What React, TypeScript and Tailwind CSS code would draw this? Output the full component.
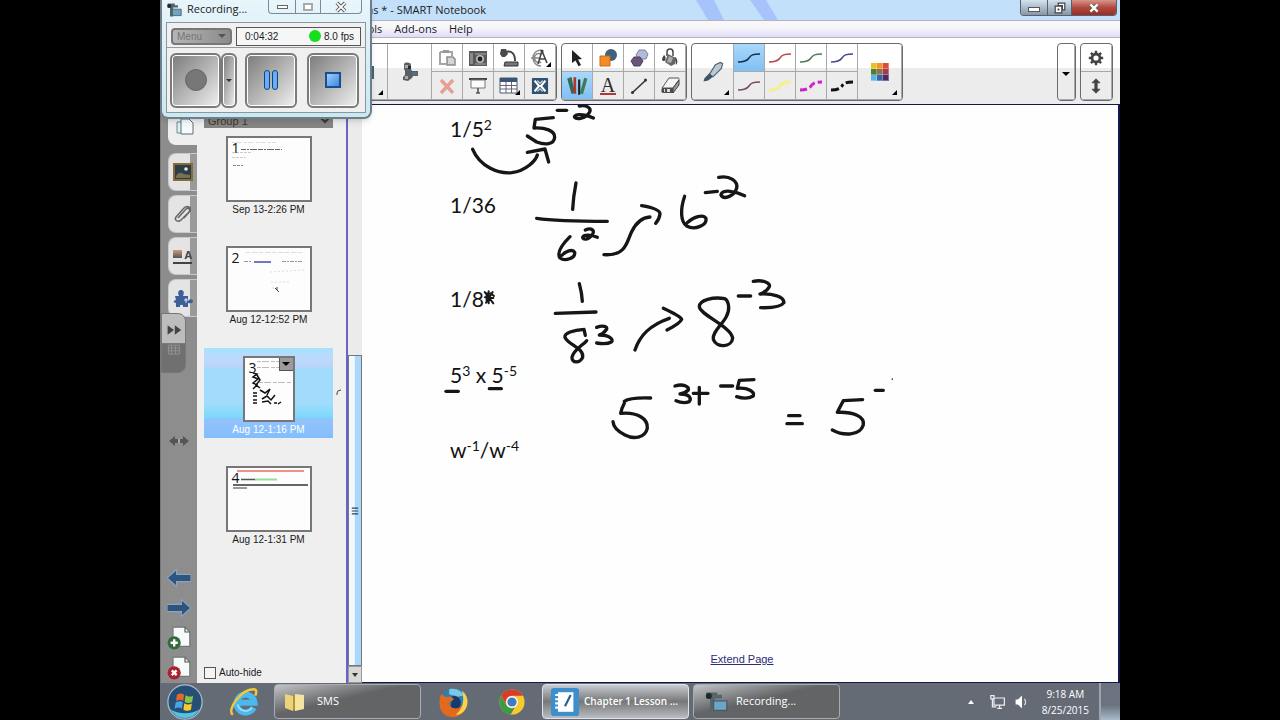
import type { ReactNode } from "react";
import clsx from "clsx";

const strokes = [
  { name: "Black pen", color: "#14304a", selected: true },
  { name: "Red pen", color: "#b8474c" },
  { name: "Green pen", color: "#4d7d5c" },
  { name: "Blue pen", color: "#45459a" },
  { name: "Purple pen", color: "#7c4668" },
  { name: "Yellow highlighter", color: "#f4f08a", width: 3 },
  { name: "Magenta dashes", color: "#cf1fcf", width: 3, dash: "7 3" },
  { name: "Black dashes", color: "#111111", width: 3, dash: "8 3 3 3" },
];

const swatches = [
  "#e8c11f", "#f0962a", "#dd4a35",
  "#4e7f33", "#8b7355", "#a33a52",
  "#5cb3ea", "#3564a8", "#4b2c5e",
];

function Icon({ children, className = "w-5 h-5" }: { children: ReactNode; className?: string }) {
  return (
    <svg viewBox="0 0 20 20" fill="none" className={clsx("shrink-0", className)} aria-hidden="true">
      {children}
    </svg>
  );
}

function Tool({
  label,
  children,
  selected = false,
  corner = false,
  className = "w-[31px]",
}: {
  label: string;
  children: ReactNode;
  selected?: boolean;
  corner?: boolean;
  className?: string;
}) {
  return (
    <button
      aria-label={label}
      className={clsx(
        "relative flex items-center justify-center border-r border-b border-[#a9a9a9]",
        selected && "bg-linear-to-b from-[#a9d8fb] to-[#7fc0f5]",
        className
      )}
    >
      {children}
      {corner && (
        <svg viewBox="0 0 5 5" className="absolute right-1 bottom-1 w-[5px] h-[5px]" aria-hidden="true">
          <path d="M5 0V5H0Z" fill="#000" />
        </svg>
      )}
    </button>
  );
}

function ToolGroup({ children, className = "" }: { children: ReactNode; className?: string }) {
  return (
    <div className={clsx("flex h-[58px] shrink-0 overflow-hidden rounded-sm border border-[#6a6a6a]", className)}>
      {children}
    </div>
  );
}

function Toolbar() {
  return (
    <div className="flex h-[66px] shrink-0 gap-1 bg-linear-to-b from-white from-45% to-[#ececec] to-46% pl-2 pr-[7px] pt-[5px]">
      <ToolGroup className="w-[389px] justify-end">
        <Tool label="Full screen" corner className="w-[220px] justify-end">
          <Icon className="w-5 h-5 mr-3">
            <rect x="1" y="4" width="18" height="13" fill="#48617a" />
          </Icon>
        </Tool>
        <Tool label="Record lesson" className="w-11">
          <Icon className="w-5 h-5">
            <path d="M4 2c1-2 7-2 7 1v4l1 2h6v5h-5l-1 2-4 3-5-1v-3l2-2V9L4 7z" fill="#5c5f62" />
            <path d="M5 3h3v3H5zM5 14h3v3H5z" fill="#a6abae" />
            <path d="M12 10h5v3h-5z" fill="#52718a" />
            <path d="M8 4h3v3H8z" fill="#2b2d2f" />
          </Icon>
        </Tool>
        <div className="grid grid-cols-[repeat(4,31px)] grid-rows-2">
          <Tool label="Paste">
            <Icon>
              <path d="M3 4h12v4M3 4v12h6" stroke="#a5a5a5" strokeWidth="2" />
              <path d="M6 2h6v3H6z" fill="#999" />
              <path d="M10 9h6l2 2v6h-8z" fill="#d4d4d4" stroke="#8c8c8c" strokeWidth="1.500" />
            </Icon>
          </Tool>
          <Tool label="Screen capture">
            <Icon>
              <rect x="1" y="3" width="18" height="15" fill="#5a5a5a" />
              <rect x="2" y="5" width="3" height="11" fill="#8a8a8a" />
              <path d="M7 6h11M7 16h11" stroke="#aaa" />
              <circle cx="12" cy="11" r="4" fill="#bbb" />
              <circle cx="12" cy="11" r="2.400" fill="#222" />
            </Icon>
          </Tool>
          <Tool label="Document camera">
            <Icon>
              <path d="M6 4c7-2 10 2 10 9" stroke="#444" strokeWidth="2" />
              <path d="M2 1h5l2 5-3 3H3L1 6z" fill="#4a4a4a" />
              <path d="M6 14h13v4H5z" fill="#777" stroke="#333" />
            </Icon>
          </Tool>
          <Tool label="Measurement tools" corner>
            <Icon>
              <path d="M11 2A8 8 0 1 0 11 18M11 6a4.500 4.500 0 1 0 0 8M1 10h8" stroke="#888" strokeWidth="1.500" />
              <path d="M12 3L8 16M12 3l5 12M9 11h7" stroke="#444" strokeWidth="1.600" />
              <circle cx="12" cy="3" r="1.600" fill="#444" />
            </Icon>
          </Tool>
          <Tool label="Delete">
            <Icon>
              <path d="M4 4l12 13M16 4L4 17" stroke="#e6a193" strokeWidth="3.400" />
            </Icon>
          </Tool>
          <Tool label="Screen shade">
            <Icon>
              <path d="M1 3h18" stroke="#444" strokeWidth="2" />
              <path d="M3 4h14v8H3z" fill="#fafafa" stroke="#777" />
              <path d="M10 12v5M8 17h4" stroke="#555" strokeWidth="1.600" />
            </Icon>
          </Tool>
          <Tool label="Table" corner>
            <Icon>
              <path d="M1 2h17v15H1z" fill="#fff" stroke="#445a70" />
              <path d="M1 2h17v4H1z" fill="#3b5674" />
              <path d="M1 9.500h17M1 13h17M7 6v11M12.500 6v11" stroke="#667" />
            </Icon>
          </Tool>
          <Tool label="SMART Exchange">
            <Icon className="h-[18px] w-[18px]">
              <rect x="1" y="1" width="18" height="18" rx="1" fill="#31506f" />
              <path d="M4 4l5 6-5 6M16 4l-5 6 5 6" stroke="#fff" strokeWidth="2.400" />
              <path d="M7 4l3 3 3-3M7 16l3-3 3 3" stroke="#b9cbdb" strokeWidth="1.500" />
            </Icon>
          </Tool>
        </div>
      </ToolGroup>

      <ToolGroup>
        <div className="grid grid-cols-[repeat(4,31px)] grid-rows-2">
          <Tool label="Select">
            <Icon>
              <path d="M5 2l10 9-4 .5 3 5.500-2.500 1.200-3-5.700L5 15z" fill="#222" />
            </Icon>
          </Tool>
          <Tool label="Shapes">
            <Icon>
              <circle cx="13" cy="7" r="6" fill="#41617f" />
              <path d="M2 8h10v10H2z" fill="#f28c28" stroke="#c96a12" />
            </Icon>
          </Tool>
          <Tool label="Regular polygons">
            <Icon>
              <path d="M10 2h6l3 4-2 5h-7L7 7z" fill="#b5b9da" stroke="#7c80a3" />
              <path d="M5 9h6l3 4-3 5H5l-3-5z" fill="#6a5578" stroke="#4f3e5c" />
            </Icon>
          </Tool>
          <Tool label="Fill">
            <Icon>
              <path d="M7 8V4a3 3 0 0 1 6 0v4" stroke="#444" strokeWidth="1.500" />
              <path d="M8 6l8 4-1 6-4 2-6-4z" fill="#666" />
              <path d="M9 8l4 2-2 5-4-1z" fill="#ababab" />
              <path d="M4 7c-3 4-2 6 0 6s2-3 1-5zM15 9c3 2 3 6 1 8z" fill="#444" />
            </Icon>
          </Tool>
          <Tool label="Pens" selected>
            <Icon className="w-[22px] h-[22px]">
              <path d="M2 3l4 14M4 2l3 14" stroke="#2d6e52" strokeWidth="2" />
              <path d="M8 2v15" stroke="#b3342e" strokeWidth="2.400" />
              <path d="M12 4v14" stroke="#222" strokeWidth="2" />
              <path d="M18 3l-4 14" stroke="#3b7d4c" strokeWidth="3" />
            </Icon>
          </Tool>
          <Tool label="Text">
            <span className="border-b-2 border-[#b0373a] px-px font-['Liberation_Serif',serif] text-xl leading-4 text-[#2b2b2b]">
              A
            </span>
          </Tool>
          <Tool label="Lines">
            <Icon>
              <path d="M3 17L17 4" stroke="#333" strokeWidth="1.600" />
              <circle cx="3.500" cy="16.500" r="1.500" fill="#333" />
              <circle cx="16.500" cy="4" r="1.500" fill="#333" />
            </Icon>
          </Tool>
          <Tool label="Eraser">
            <Icon>
              <path d="M9 2h9c2 0 1 2 0 3l-5 7H2z" fill="#f4f4f4" stroke="#555" />
              <path d="M2 12h11v5H3c-2 0-2-3-1-5z" fill="#4c4c4c" />
              <path d="M13 12l6-8v5l-6 8z" fill="#999" stroke="#444" />
              <path d="M4 13h1v3H4zM7 13h3v3H7z" fill="#ddd" />
            </Icon>
          </Tool>
        </div>
      </ToolGroup>

      <ToolGroup>
        <Tool label="Pen types" corner className="w-[42px]">
          <Icon className="w-6 h-6">
            <path d="M16 2l2 1-1 4-7 7-3-2 5-8z" fill="#bcc8d2" stroke="#526679" />
            <path d="M7 11l3 3-4 3-4 1 1-3z" fill="#3f5468" />
          </Icon>
        </Tool>
        <div className="grid grid-cols-[repeat(4,31px)] grid-rows-2">
          {strokes.map((s) => (
            <Tool key={s.name} label={s.name} selected={s.selected}>
              <svg viewBox="0 0 24 14" fill="none" className="w-6 h-[14px]" aria-hidden="true">
                <path
                  d="M1 11c5 0 9-1 11-4s4-4 11-4"
                  stroke={s.color}
                  strokeWidth={s.width ?? 1.5}
                  strokeDasharray={s.dash}
                />
              </svg>
            </Tool>
          ))}
        </div>
        <Tool label="Colors" corner className="w-11">
          <span className="grid grid-cols-3 bg-[#9a8f86]">
            {swatches.map((c) => (
              <span key={c} className="h-[6px] w-[6px] border-r border-b border-white/30" style={{ backgroundColor: c }} />
            ))}
          </span>
        </Tool>
      </ToolGroup>

      <div className="flex-1" />
      <ToolGroup>
        <Tool label="More tools" className="w-[17px]">
          <svg viewBox="0 0 8 4" className="h-1 w-2 mt-1" aria-hidden="true">
            <path d="M0 0h8L4 4z" fill="#000" />
          </svg>
        </Tool>
      </ToolGroup>
      <ToolGroup>
        <div className="grid grid-rows-2">
          <Tool label="Customize">
            <Icon className="w-4 h-4">
              <circle cx="10" cy="10" r="5" stroke="#444" strokeWidth="3.500" />
              <path
                d="M10 1v3M10 16v3M1 10h3M16 10h3M3.600 3.600l2.200 2.200M14.200 14.200l2.200 2.200M16.400 3.600l-2.200 2.200M5.800 14.200l-2.200 2.200"
                stroke="#444"
                strokeWidth="3"
              />
            </Icon>
          </Tool>
          <Tool label="Move toolbar">
            <Icon className="w-4 h-4">
              <path d="M10 4v12" stroke="#444" strokeWidth="4" />
              <path d="M5 6l5-5 5 5zM5 14l5 5 5-5z" fill="#444" stroke="#444" />
            </Icon>
          </Tool>
        </div>
      </ToolGroup>
    </div>
  );
}

function TitleBar() {
  return (
    <div className="relative flex h-5 shrink-0 items-center overflow-hidden bg-[#c3e0fb]">
      <svg viewBox="0 0 100 20" className="absolute left-[530px] h-5 w-[100px]" aria-hidden="true">
        <path d="M6 0h18l10 20H18zM60 0h16l12 20H74z" fill="#a6c3fc" />
      </svg>
      <h1 className="w-[326px] text-right text-[11px]">Lessons * - SMART Notebook</h1>
      <div className="relative ml-auto mr-[3px] flex h-4 self-start overflow-hidden rounded-b border border-t-0 border-[#55626e]">
        <button aria-label="Minimize" className="flex w-[27px] items-center justify-center border-r border-[#55626e] bg-linear-to-b from-[#d5e3f0] to-[#8696a6]">
          <span className="mt-1 h-[5px] w-3 border border-[#555] bg-white" />
        </button>
        <button aria-label="Restore" className="flex w-6 items-center justify-center border-r border-[#55626e] bg-linear-to-b from-[#d5e3f0] to-[#8696a6]">
          <Icon className="h-3 w-3">
            <path d="M7 2h11v11h-4V6H7zM2 7h11v11H2z" fill="#fff" stroke="#444" strokeWidth="2" />
            <path d="M6 11h3v3H6z" fill="#444" />
          </Icon>
        </button>
        <button aria-label="Close" className="flex w-11 items-center justify-center bg-linear-to-b from-[#d8958e] via-[#b04a41] to-[#9b2d26]">
          <Icon className="h-3 w-3">
            <path d="M4 4l12 12M16 4L4 16" stroke="#553" strokeWidth="6" />
            <path d="M4 4l12 12M16 4L4 16" stroke="#fff" strokeWidth="4" />
          </Icon>
        </button>
      </div>
    </div>
  );
}

function RailTab({ label, children, active = false }: { label: string; children: ReactNode; active?: boolean }) {
  return (
    <button
      aria-label={label}
      className={clsx(
        "flex shrink-0 items-center self-end rounded-l-lg border border-r-0 pl-1",
        active
          ? "mb-1 h-10 w-[29px] rounded-tl-none border-[#eee] bg-[#efefef] pl-[6px] pt-1"
          : "h-[38px] w-[29px] border-[#c9c9c9] bg-linear-to-r from-[#e4e4e4] from-75% to-[#9a9a9a] to-76%"
      )}
    >
      {children}
    </button>
  );
}

function PageIcon({ badge, mark }: { badge: string; mark: string }) {
  return (
    <Icon className="h-6 w-6">
      <path d="M5 1h10l4 4v12H5z" fill="#f6faf9" stroke="#777" />
      <path d="M15 1v4h4" stroke="#555" />
      <circle cx="6" cy="14" r="5.500" fill={badge} />
      <path d={mark} stroke="#fff" strokeWidth="2" />
    </Icon>
  );
}

function Rail() {
  return (
    <nav className="flex w-[37px] shrink-0 flex-col gap-1 border-l border-[#777] bg-[#8d8d8d]" aria-label="Side tabs">
      <RailTab label="Page sorter" active>
        <Icon className="h-5 w-5">
          <path d="M2 5h9v11H2z" fill="#dff1f3" stroke="#6b8a92" />
          <path d="M6 2h8l4 4v11H6z" fill="#f5fbfb" stroke="#56727a" />
        </Icon>
      </RailTab>
      <RailTab label="Gallery">
        <Icon className="h-5 w-5">
          <rect x="1" y="2" width="18" height="16" fill="#2d3d45" stroke="#8a6a35" strokeWidth="2" />
          <path d="M3 14c3-5 6-3 8-2s4 0 6 1v3H3z" fill="#77705a" />
          <circle cx="13" cy="7" r="1.800" fill="#dfe9ee" />
        </Icon>
      </RailTab>
      <RailTab label="Attachments">
        <Icon className="h-5 w-5">
          <path
            d="M5 14l8-9c2-2 5 0 3 3l-8 8c-3 3-7 0-5-3l8-9c3-3 8-1 6 3l-6 7"
            stroke="#666"
            strokeWidth="1.500"
          />
        </Icon>
      </RailTab>
      <RailTab label="Properties">
        <span className="relative block w-[19px] border-b-2 border-[#444]">
          <span className="absolute left-0 bottom-1 h-2 w-[9px] bg-linear-to-b from-[#d49a70] to-[#555]" />
          <span className="block text-right text-[11px] leading-[14px] font-bold text-[#444]">A</span>
        </span>
      </RailTab>
      <RailTab label="Add-ons">
        <Icon className="h-5 w-5">
          <path
            d="M2 8h4c-2-4 0-6 2-6s4 2 2 6h5v4c4-2 5 0 5 1s-1 3-5 2v4h-5c1-3-4-3-3 0H3v-4c-3 0-3-3 0-3z"
            fill="#3c5f98"
          />
          <path d="M13 10v5M11 12h5" stroke="#dce8f5" />
        </Icon>
      </RailTab>
      <button aria-label="Expand" className="-mt-2 flex h-[60px] w-[25px] shrink-0 flex-col items-center rounded-r-lg border border-[#777] bg-linear-to-b from-[#bdbdbd] from-50% to-[#707070] to-51% pt-2">
        <Icon className="h-4 w-4">
          <path d="M2 4l8 6-8 6zM11 4l8 6-8 6z" fill="#444" />
        </Icon>
        <Icon className="mt-1 h-4 w-4">
          <path d="M3 4h14v11H3zM3 7.500h14M3 11h14M7 4v11M12 4v11" stroke="#999" />
        </Icon>
      </button>
      <button aria-label="Resize sorter" className="mt-[54px] flex justify-center">
        <Icon className="h-5 w-5">
          <path d="M6 5L0 10l6 5v-3h8v3l6-5-6-5v3H6z" fill="#555" />
          <path d="M9 8h2v4H9z" fill="#aaa" />
        </Icon>
      </button>
      <div className="mt-auto flex flex-col items-center">
        <button aria-label="Previous page" className="flex h-[30px] items-center">
          <Icon className="h-6 w-6">
            <path d="M0 10l8-7v4h12v6H8v4z" fill="#2f5480" stroke="#8aa3be" />
          </Icon>
        </button>
        <button aria-label="Next page" className="flex h-[30px] items-center">
          <Icon className="h-6 w-6">
            <path d="M20 10l-8-7v4H0v6h12v4z" fill="#2f5480" stroke="#8aa3be" />
          </Icon>
        </button>
        <button aria-label="Add page" className="flex h-[30px] items-center">
          <PageIcon badge="#33693c" mark="M6 11v6M3 14h6" />
        </button>
        <button aria-label="Delete page" className="flex h-[30px] items-center">
          <PageIcon badge="#a8232f" mark="M4 12l4 4M8 12l-4 4" />
        </button>
      </div>
    </nav>
  );
}

const pages = [
  {
    number: 1,
    date: "Sep 13-2:26 PM",
    art: (
      <>
        <path d="M4 4.500h44" stroke="#ddd" strokeDasharray="3 1 6 2" />
        <path d="M13 11.500h41" stroke="#666" strokeDasharray="5 1 2 1 7 1" />
        <path d="M4 14.500h20M4 19.500h14" stroke="#ccc" strokeDasharray="3 1" />
        <path d="M5 27.500h10" stroke="#888" strokeDasharray="3 1" />
      </>
    ),
  },
  {
    number: 2,
    date: "Aug 12-12:52 PM",
    art: (
      <>
        <path d="M18 4.500h56" stroke="#ddd" strokeDasharray="4 2 6 1" />
        <path d="M54 13.500h20M16 13.500h7" stroke="#999" strokeDasharray="4 1 2 1" />
        <path d="M26 14h17" stroke="#4548ab" strokeWidth="1.500" />
        <path d="M42 24l34-2M43 34h18M44 40h4" stroke="#ddd" strokeDasharray="2 2" />
        <path d="M47 40l4 4M49 39v3" stroke="#444" />
      </>
    ),
  },
  {
    number: 3,
    date: "Aug 12-1:16 PM",
    selected: true,
    art: (
      <>
        <path d="M12 3.500h22M12 9.500h22M14 24.500h32" stroke="#bbb" strokeDasharray="4 1 7 2" />
        <path
          d="M8 15l4 1-4 3 5 2-5 4 4 2-4 4M12 17l3 5-4 5 4 3M8 35h4M8 38h4M8 42h4M8 45h4M15 32l5 3 5-4-3 6M17 41l5-3 4 4 4-5M17 44l6-1 3 3M29 45h3M33 46l3-2"
          stroke="#111"
          strokeWidth="1.500"
        />
      </>
    ),
  },
  {
    number: 4,
    date: "Aug 12-1:31 PM",
    art: (
      <>
        <path d="M9 3h67" stroke="#ef8f85" strokeWidth="2" />
        <path d="M13 11.500h14" stroke="#555" strokeWidth="1.500" />
        <path d="M27 11.500h22" stroke="#94de9c" strokeWidth="2" />
        <path d="M5 17h75" stroke="#666" strokeWidth="2" />
        <path d="M5 20h14" stroke="#777" strokeWidth="1.500" />
      </>
    ),
  },
];

function PageSorter() {
  return (
    <aside className="flex w-[149px] shrink-0 flex-col bg-[#efefef] pl-[7px] pt-2 font-['Liberation_Sans',sans-serif] text-[10px]">
      <select aria-label="Group" className="h-[15px] w-[129px] shrink-0 bg-[#858585] text-[11px] text-[#40382a]">
        <option>Group 1</option>
      </select>
      <ol className="flex flex-col gap-5">
        {pages.map((page) => (
          <li
            key={page.number}
            className={clsx(
              "relative flex h-[90px] w-[129px] flex-col items-center pt-2",
              page.selected &&
                "bg-linear-to-b from-[#a5e3fd] via-[#bdd8fb] via-12% to-[#84bdfc] text-white"
            )}
          >
            {page.selected && (
              <span className="absolute inset-x-0 top-[20px] h-[50px] bg-linear-to-b from-[#a2dcfd] from-70% to-[#78d9fb]" />
            )}
            <div
              className={clsx(
                "relative h-[66px] shrink-0 overflow-hidden border-2 border-[#777] bg-[#fdfdfd] text-[#111]",
                page.selected ? "w-[52px]" : "w-[86px]"
              )}
            >
              <svg viewBox="0 0 84 62" fill="none" className="absolute left-0 top-0 h-[62px] w-[84px]" aria-hidden="true">
                {page.art}
              </svg>
              <span className="relative block pl-1 pt-1 font-['Open_Sans',sans-serif] text-sm leading-3">{page.number}</span>
              {page.selected && (
                <button aria-label="Page menu" className="absolute right-0 top-0 flex h-[13px] w-[14px] items-center justify-center border-b border-l border-[#555] bg-[#9b9b9b]">
                  <svg viewBox="0 0 8 4" className="h-1 w-2" aria-hidden="true">
                    <path d="M0 0h8L4 4z" fill="#000" />
                  </svg>
                </button>
              )}
            </div>
            <span className="relative leading-4">{page.date}</span>
            {page.selected && (
              <svg viewBox="0 0 5 8" fill="none" className="absolute -right-2 top-[41px] h-2 w-[5px]" aria-hidden="true">
                <path d="M5 1Q1 1 1 4v2" stroke="#444" />
              </svg>
            )}
          </li>
        ))}
      </ol>
      <label className="mt-auto mb-1 flex items-center gap-[3px] leading-3">
        <input type="checkbox" className="h-3 w-3 appearance-none border border-[#555] bg-[#f4f4f4]" />
        Auto-hide
      </label>
    </aside>
  );
}

function Scrollbar() {
  return (
    <div className="flex w-4 shrink-0 flex-col border-l-2 border-[#6a62c4] bg-[#ebebeb]">
      <div className="h-[250px] shrink-0" />
      <div className="flex flex-1 items-center justify-center border border-[#777] bg-linear-to-r from-[#f2f8fd] from-45% to-[#a9d8fb] to-50%">
        <Icon className="h-2 w-2">
          <path d="M2 3h16M2 10h16M2 17h16" stroke="#26455e" strokeWidth="3" />
        </Icon>
      </div>
      <button aria-label="Scroll down" className="flex h-[17px] shrink-0 items-center justify-center border border-[#999] bg-[#d8d8d8]">
        <svg viewBox="0 0 8 4" className="h-1 w-2" aria-hidden="true">
          <path d="M1 0h6L4 4z" fill="#333" />
        </svg>
      </button>
    </div>
  );
}

// pen strokes on the page, drawn at three units per pixel
const upperInk = [
  "M370 53L316 58L312 84C345 82 375 92 374 112C372 134 345 136 320 126L292 108",
  "M382 31H410",
  "M448 18C470 14 486 25 478 38C468 55 440 60 434 52C430 42 460 40 490 54",
  "M128 148C150 200 205 222 245 218C290 212 318 180 322 165",
  "M292 157L345 147L356 186",
  "M438 249Q430 290 428 328",
  "M320 355Q380 364 532 364",
  "M420 410C395 435 380 460 390 474C405 485 437 475 434 457C428 445 405 455 396 466",
  "M466 390C485 382 497 392 486 405C475 420 458 420 458 412C462 402 485 405 502 412",
  "M522 464C590 468 590 425 605 395C620 365 640 352 660 351",
  "M635 317C665 322 690 330 690 342Q688 358 677 370",
  "M764 289C750 330 752 365 770 378C795 392 832 375 828 355C820 342 790 350 772 368",
  "M826 278L862 274",
  "M866 232C900 225 925 245 920 265C912 290 880 300 873 285C875 265 920 275 944 287",
];

const lowerInk = [
  "M448 41Q456 70 457 94",
  "M376 130L498 126",
  "M462 178C430 180 402 190 405 202C415 225 463 235 458 262C450 280 425 280 426 262C430 240 460 225 470 212M462 178L466 196",
  "M500 172C520 165 532 170 530 178Q520 192 508 195C540 195 552 210 544 216Q530 224 500 219",
  "M615 240C630 195 660 165 718 145",
  "M700 115Q750 138 755 148Q750 160 711 180",
  "M884 86C850 80 808 90 808 110C810 135 905 170 908 205C905 232 860 235 850 208C845 180 900 150 896 110Q894 90 884 86",
  "M925 78H962",
  "M970 34C1000 28 1022 40 1018 50Q1010 65 990 72C1030 70 1062 80 1062 98Q1050 115 992 113",
  "M48 364H85",
  "M178 356H214",
  "M662 384Q600 382 583 394M583 400Q575 415 572 430C620 425 655 445 652 475C645 505 610 508 585 495C565 485 550 470 549 455",
  "M735 348C760 340 778 350 775 360Q765 370 750 372C780 372 785 385 778 395Q760 402 738 392",
  "M808 352V402M790 370H834",
  "M872 348H908",
  "M972 329L928 331L922 355C955 352 975 365 970 378Q950 390 920 380",
  "M1076 437H1110",
  "M1071 461H1117",
  "M1298 389L1240 392L1222 427C1270 425 1305 440 1300 465C1290 498 1240 498 1207 480",
  "M1336 361H1360",
];

function Ink() {
  return (
    <svg
      viewBox="0 0 560 370"
      fill="none"
      stroke="#161616"
      strokeLinecap="round"
      strokeLinejoin="round"
      className="absolute left-0 top-0 h-[370px] w-[560px]"
      aria-hidden="true"
    >
      <g transform="translate(68 -5) scale(.3333)" strokeWidth="10">
        {upperInk.map((d) => (
          <path key={d} d={d} />
        ))}
      </g>
      <g transform="translate(68 165) scale(.3333)" strokeWidth="10">
        {lowerInk.map((d) => (
          <path key={d} d={d} />
        ))}
        <path d="M164 66L190 100M188 66L168 98M176 64V100M165 82L190 84M182 70l10 8M170 70v26" strokeWidth="6" />
        <path d="M1387 327v1" strokeWidth="4" />
      </g>
    </svg>
  );
}

function Canvas() {
  return (
    <main className="relative flex min-w-0 flex-1 flex-col overflow-hidden border-r-2 border-b border-[#16164f] bg-[#fefefe] pl-[88px] pt-[10px]">
      <div className="font-['Lato',sans-serif] text-[21px] leading-7 text-[#111] [&_sup]:top-[-7px] [&_sup]:text-sm [&_sup]:leading-none">
        <p className="mb-12">1/5<sup>2</sup></p>
        <p className="mb-[66px]">1/36</p>
        <p className="mb-12">1/8</p>
        <p className="mb-[47px]">5<sup>3</sup> x 5<sup>-5</sup></p>
        <p>w<sup>-1</sup>/w<sup>-4</sup></p>
      </div>
      <Ink />
      <a
        href="#extend"
        className="mt-auto mb-[15px] mr-[84px] self-center font-['Liberation_Sans',sans-serif] text-[11px] leading-4 text-[#2c2c78] underline"
      >
        Extend Page
      </a>
    </main>
  );
}

function RecorderButton({ label, children, className }: { label: string; children: ReactNode; className: string }) {
  return (
    <button
      aria-label={label}
      className={clsx(
        "flex h-[55px] items-center justify-center rounded-md border-2 border-[#7b7b7b] bg-linear-to-br from-[#7c7c7c] via-[#b4b4b4] to-[#f0f0f0] ring-1 ring-white ring-inset",
        className
      )}
    >
      {children}
    </button>
  );
}

function CamcorderIcon({ className }: { className: string }) {
  return (
    <Icon className={className}>
      <path d="M2 2h9v5H2zM11 4h4v3h-4zM5 7h4v11H5z" fill="#56646c" />
      <path d="M8 9h11v8H8z" fill="#6ba6c8" stroke="#4b5961" />
      <circle cx="4" cy="5" r="2.500" fill="#20282c" />
    </Icon>
  );
}

function Recorder() {
  return (
    <section
      aria-label="Recorder"
      className="absolute left-0 top-0 z-10 flex h-[119px] w-[212px] flex-col rounded-b-lg border-2 border-t-0 border-[#6f7f88] bg-linear-to-b from-[#e8f5fb] to-[#c9e8f3] px-1 pb-1 shadow-md"
    >
      <header className="flex h-[22px] shrink-0 items-start text-[11px]">
        <CamcorderIcon className="mt-[2px] h-4 w-4" />
        <h2 className="ml-[5px] mt-px leading-4">Recording...</h2>
        <div className="ml-auto mr-1 flex h-[14px] overflow-hidden rounded-b border border-t-0 border-[#7b8a94]">
          <button aria-label="Minimize recorder" className="flex w-[27px] items-center justify-center border-r border-[#7b8a94]">
            <span className="h-1 w-[11px] border border-[#666] bg-white" />
          </button>
          <button aria-label="Maximize recorder" className="flex w-[25px] items-center justify-center border-r border-[#7b8a94]">
            <span className="h-2 w-[10px] border-2 border-[#aaa] bg-white" />
          </button>
          <button aria-label="Close recorder" className="flex w-10 items-center justify-center">
            <Icon className="h-3 w-3">
              <path d="M3 3l14 14M17 3L3 17" stroke="#555" strokeWidth="6" />
              <path d="M3 3l14 14M17 3L3 17" stroke="#fff" strokeWidth="3" />
            </Icon>
          </button>
        </div>
      </header>
      <div className="flex flex-1 flex-col border border-[#8c979c] bg-[#f0f0f0]">
        <div className="flex h-[25px] shrink-0 items-center gap-1 border-b border-[#999] px-1 pt-[2px] font-['Liberation_Sans',sans-serif] text-[10px]">
          <button className="flex h-[17px] w-[61px] items-center justify-between rounded border-2 border-[#777] bg-linear-to-r from-[#b5b5b5] to-[#8b8b8b] px-1 text-[#777]">
            Menu
            <svg viewBox="0 0 8 4" className="h-1 w-2" aria-hidden="true">
              <path d="M0 0h8L4 4z" fill="#555" />
            </svg>
          </button>
          <div className="flex h-[19px] flex-1 items-center border border-[#555] bg-[#f6f6f6] pl-2 pr-[6px] text-[#222]">
            <time>0:04:32</time>
            <span className="ml-auto mr-[3px] h-3 w-3 rounded-full bg-[#14e01c]" />
            8.0 fps
          </div>
        </div>
        <div className="flex flex-1 items-center px-[3px]">
          <RecorderButton label="Record" className="w-[51px]">
            <span className="h-[22px] w-[22px] rounded-full border border-[#666] bg-[#777]" />
          </RecorderButton>
          <RecorderButton label="Record options" className="w-4">
            <svg viewBox="0 0 8 4" className="h-[3px] w-[6px]" aria-hidden="true">
              <path d="M0 0h8L4 4z" fill="#333" />
            </svg>
          </RecorderButton>
          <RecorderButton label="Pause" className="ml-2 w-[52px]">
            <span className="flex gap-[2px]">
              <span className="h-5 w-[6px] rounded-sm border border-[#173f86] bg-[#69aef0]" />
              <span className="h-5 w-[6px] rounded-sm border border-[#173f86] bg-[#69aef0]" />
            </span>
          </RecorderButton>
          <RecorderButton label="Stop" className="ml-[10px] w-[52px]">
            <span className="h-4 w-4 border-2 border-[#1b4d91] bg-linear-to-br from-[#9dd0fa] to-[#3b8ae0]" />
          </RecorderButton>
        </div>
      </div>
    </section>
  );
}

function TaskButton({ label, children, active = false }: { label: string; children: ReactNode; active?: boolean }) {
  return (
    <button
      className={clsx(
        "flex h-[35px] w-[147px] shrink-0 items-center rounded-sm border text-white",
        active
          ? "gap-[5px] border-[#dfe3e8] bg-linear-to-b from-[#c9ccd1] via-[#777879] to-[#b9bcc0] pl-2 font-semibold text-[10px]"
          : "gap-2 border-[#a9abae] bg-linear-to-br from-[#c3c5c8] to-[#636466] to-45% pl-[10px]"
      )}
    >
      {children}
      {label}
    </button>
  );
}

function Taskbar() {
  return (
    <footer className="flex h-[37px] shrink-0 items-center bg-[#656b75] text-[11px] text-white">
      <button aria-label="Start" className="flex w-[50px] justify-center">
        <Icon className="h-9 w-9">
          <circle cx="10" cy="10" r="9.500" fill="#254f76" stroke="#a9bccb" strokeWidth=".7" />
          <path d="M2 14a9 9 0 0 0 16 0c-4 3-12 3-16 0z" fill="#55c3e0" />
          <path d="M5.500 6c1.500-1 3-1 4 0L9 9.500c-1-1-2.500-1-4 0z" fill="#e8652b" />
          <path d="M10.300 6.300c1.500 1 3 .8 4.200.2L14 10c-1.300.6-3 .8-4.200-.2z" fill="#8fc53f" />
          <path d="M4.800 10.300c1.500-1 3-1 4 0l-.6 3.500c-1-1-2.500-1-4 0z" fill="#4ba3e3" />
          <path d="M9.600 10.700c1.500 1 3 .8 4.200.2l-.5 3.400c-1.300.6-3 .8-4.200-.2z" fill="#fbc82e" />
        </Icon>
      </button>
      <button aria-label="Internet Explorer" className="flex w-[64px] justify-center pl-1">
        <Icon className="h-8 w-8">
          <path d="M16 13.500a5.600 5.600 0 1 1 .6-3H7" stroke="#4bb8ee" strokeWidth="3.800" />
          <path d="M15 13.500a5 5 0 0 1-9-2" stroke="#a4e2fb" />
          <path d="M3 18C-1 15 8 2 16 2c2 0 2 2 1 4" stroke="#f0c93b" strokeWidth="1.500" />
        </Icon>
      </button>
      <TaskButton label="SMS">
        <span className="mr-1 flex">
          <Icon className="h-7 w-5">
            <path d="M0 2l8 2v15l-8-3z" fill="#ecd27a" />
            <path d="M8 4l2-1v15l-2 1z" fill="#b79439" />
            <path d="M10 2l9 1v14l-9 2z" fill="#f5e3a0" />
          </Icon>
        </span>
      </TaskButton>
      <button aria-label="Firefox" className="flex w-[62px] justify-center pl-1">
        <Icon className="h-8 w-8">
          <circle cx="10" cy="10" r="8.500" fill="#2c7fb5" />
          <path d="M7 2c4-1 8 1 9 4l-5 1-4-2z" fill="#7cc7e8" />
          <path d="M9 6c4 0 6 3 5 6s-4 3-6 1z" fill="#173a69" />
          <path d="M2 5l3 2c2-1 3 0 5 1-1 2-3 1-3 3 0 3 5 4 7 2s3-5 2-9c4 6 2 13-4 15S1 17 1 11c0-3 0-4 1-6z" fill="#e26a1f" />
          <path d="M15 3c5 4 4 10 1 13-2 2-4 2-5 2 4-3 6-8 4-15z" fill="#fbd14b" />
        </Icon>
      </button>
      <button aria-label="Chrome" className="flex w-[58px] justify-center">
        <Icon className="h-7 w-7">
          <circle cx="10" cy="10" r="9" fill="#f5c92f" />
          <path d="M2.200 5.500a9 9 0 0 1 15.600 0H10a4.500 4.500 0 0 0-4 6.500z" fill="#d93b2f" />
          <path d="M2.200 5.500L6 12.300A4.500 4.500 0 0 0 12 14l-3 5a9 9 0 0 1-6.800-13.500z" fill="#3a9a47" />
          <circle cx="10" cy="10" r="4.200" fill="#fff" />
          <circle cx="10" cy="10" r="3.300" fill="#3f7ac4" />
        </Icon>
      </button>
      <div className="flex gap-1 pl-px">
        <TaskButton label="Chapter 1 Lesson ..." active>
          <Icon className="h-7 w-7">
            <rect x="0" y="0" width="20" height="20" rx="2" fill="#3d8fcb" />
            <path d="M5 3h11v14H5z" fill="#fff" />
            <path d="M3 5h4M3 8h4M3 11h4M3 14h4" stroke="#fff" strokeWidth="1.500" />
            <path d="M14 5l-4 8" stroke="#245f91" strokeWidth="1.500" />
          </Icon>
        </TaskButton>
        <TaskButton label="Recording...">
          <CamcorderIcon className="h-6 w-6" />
        </TaskButton>
      </div>
      <div className="ml-auto flex h-full items-center">
        <button aria-label="Show hidden icons" className="mr-4">
          <svg viewBox="0 0 6 4" className="h-1 w-[6px]" aria-hidden="true">
            <path d="M0 4h6L3 0z" fill="#fff" />
          </svg>
        </button>
        <Icon className="mr-2 h-4 w-4">
          <path d="M5 5h13v9H5zM9 18h6M12 14v4M1 2h4v4H1zM3 6v10h5" stroke="#eee" strokeWidth="1.500" />
        </Icon>
        <Icon className="mr-3 h-4 w-4">
          <path d="M2 7h3l5-5v16l-5-5H2z" fill="#fff" />
          <path d="M13 6q3 4 0 8" stroke="#ddd" strokeWidth="1.500" />
        </Icon>
        <p className="mr-[10px] text-center text-[10px] leading-4">
          9:18 AM
          <br />
          8/25/2015
        </p>
        <button aria-label="Show desktop" className="h-full w-[21px] border-l-2 border-[#9fa5ad] bg-linear-to-b from-[#6b7280] from-60% to-[#a9bccb]" />
      </div>
    </footer>
  );
}

export default function App() {
  return (
    <div className="min-h-screen bg-black font-['Open_Sans',sans-serif] text-[#1a1a1a]">
      <div className="relative mx-auto flex h-screen w-3/4 flex-col overflow-hidden">
        <TitleBar />
        <nav className="flex h-[18px] shrink-0 items-center gap-3 border-t border-b border-[#b5b5c0] bg-linear-to-b from-[#f7f7f9] from-40% to-[#e0dcfa] pl-[195px] text-[11px]">
          <button>Tools</button>
          <button>Add-ons</button>
          <button>Help</button>
        </nav>
        <Toolbar />
        <div className="flex min-h-0 flex-1 border-t border-[#16164f]">
          <Rail />
          <PageSorter />
          <Scrollbar />
          <Canvas />
        </div>
        <Taskbar />
        <Recorder />
      </div>
    </div>
  );
}
